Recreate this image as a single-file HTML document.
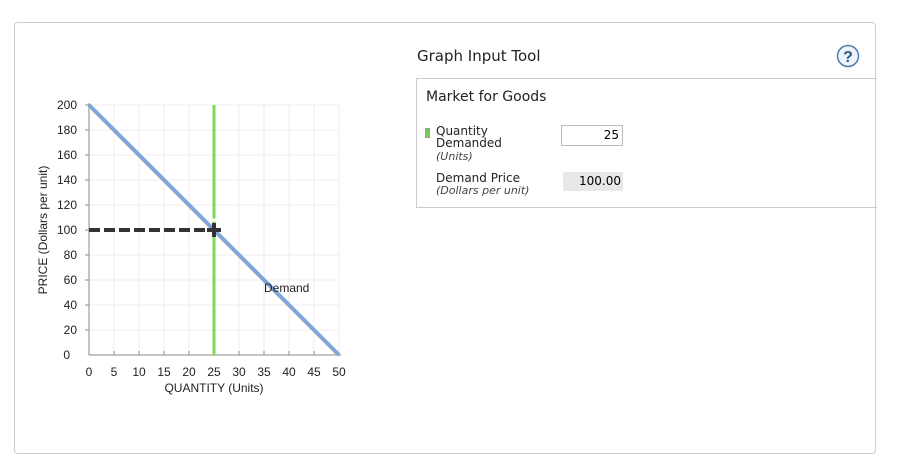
<!DOCTYPE html>
<html><head><style>
body{margin:0;width:916px;height:471px;background:#fff;position:relative;overflow:hidden;font-family:"DejaVu Sans",Verdana,sans-serif;}
.outer{position:absolute;left:14px;top:22px;width:860px;height:430px;border:1px solid #ccc;border-radius:4px;}
.t{position:absolute;color:#222;}
</style></head><body>
<div class="outer"></div>
<div class="t" style="left:417px;top:47px;font-size:15px;">Graph Input Tool</div>
<svg style="position:absolute;left:836px;top:44px" width="25" height="25"><circle cx="12" cy="12" r="10.5" fill="#eef3f8" stroke="#4a7bb0" stroke-width="1.5"/><text x="12" y="18" text-anchor="middle" font-family="Liberation Sans,sans-serif" font-size="16" font-weight="bold" fill="#2b5a8a">?</text></svg>
<div style="position:absolute;left:416px;top:78px;width:460px;height:128px;border:1px solid #ccc;border-right:none;"></div>
<div class="t" style="left:426px;top:89px;font-size:14px;">Market for Goods</div>
<div style="position:absolute;left:425px;top:128px;width:5px;height:10px;background:#7ccc5c;border:1px solid #999;box-sizing:border-box"></div>
<div class="t" style="left:436px;top:125px;font-size:12px;line-height:12px;">Quantity<br>Demanded</div>
<div class="t" style="left:436px;top:150px;font-size:11px;font-style:italic;color:#444">(Units)</div>
<div style="position:absolute;left:561px;top:125px;border:1px solid #bbb;text-align:right;font-size:12px;line-height:19px;box-sizing:border-box;padding-right:3px;width:62px;height:21px">25</div>
<div class="t" style="left:436px;top:171px;font-size:12px;">Demand Price</div>
<div class="t" style="left:436px;top:184px;font-size:11px;font-style:italic;color:#444">(Dollars per unit)</div>
<div style="position:absolute;left:563px;top:172px;width:60px;height:19px;background:#e8e8e8;text-align:right;font-size:12px;line-height:19px;box-sizing:border-box;padding-right:2px">100.00</div>
<svg style="position:absolute;left:0;top:0" width="916" height="471" font-family="Liberation Sans,Arial,sans-serif" font-size="12" fill="#222">
<g stroke="#eee" stroke-width="1">
<line x1="114" y1="105" x2="114" y2="355"/><line x1="139" y1="105" x2="139" y2="355"/><line x1="164" y1="105" x2="164" y2="355"/><line x1="189" y1="105" x2="189" y2="355"/><line x1="239" y1="105" x2="239" y2="355"/><line x1="264" y1="105" x2="264" y2="355"/><line x1="289" y1="105" x2="289" y2="355"/><line x1="314" y1="105" x2="314" y2="355"/><line x1="339" y1="105" x2="339" y2="355"/>
<line x1="89" y1="105" x2="339" y2="105"/><line x1="89" y1="130" x2="339" y2="130"/><line x1="89" y1="155" x2="339" y2="155"/><line x1="89" y1="180" x2="339" y2="180"/><line x1="89" y1="205" x2="339" y2="205"/><line x1="89" y1="255" x2="339" y2="255"/><line x1="89" y1="280" x2="339" y2="280"/><line x1="89" y1="305" x2="339" y2="305"/><line x1="89" y1="330" x2="339" y2="330"/>
</g>
<g stroke="#888" stroke-width="1">
<line x1="89" y1="103" x2="89" y2="355"/><line x1="89" y1="355" x2="341" y2="355"/>
<line x1="85" y1="105" x2="89" y2="105"/><line x1="85" y1="130" x2="89" y2="130"/><line x1="85" y1="155" x2="89" y2="155"/><line x1="85" y1="180" x2="89" y2="180"/><line x1="85" y1="205" x2="89" y2="205"/><line x1="85" y1="230" x2="89" y2="230"/><line x1="85" y1="255" x2="89" y2="255"/><line x1="85" y1="280" x2="89" y2="280"/><line x1="85" y1="305" x2="89" y2="305"/><line x1="85" y1="330" x2="89" y2="330"/>
<line x1="114" y1="351" x2="114" y2="355"/><line x1="139" y1="351" x2="139" y2="355"/><line x1="164" y1="351" x2="164" y2="355"/><line x1="189" y1="351" x2="189" y2="355"/><line x1="239" y1="351" x2="239" y2="355"/><line x1="264" y1="351" x2="264" y2="355"/><line x1="289" y1="351" x2="289" y2="355"/><line x1="314" y1="351" x2="314" y2="355"/>
</g>
<line x1="214" y1="105" x2="214" y2="355" stroke="#7ed957" stroke-width="3"/>
<line x1="89" y1="105" x2="339" y2="355" stroke="#7fa6d6" stroke-width="4"/>
<line x1="211" y1="220" x2="217" y2="220" stroke="#fff" stroke-width="3"/>
<line x1="89" y1="230" x2="206" y2="230" stroke="#333" stroke-width="4" stroke-dasharray="11,4"/>
<path d="M207 230H221M214 223V237" stroke="#333" stroke-width="4"/>
<text x="264" y="292">Demand</text>
<g text-anchor="end">
<text x="77" y="109">200</text><text x="77" y="134">180</text><text x="77" y="159">160</text><text x="77" y="184">140</text><text x="77" y="209">120</text><text x="77" y="234">100</text><text x="77" y="259">80</text><text x="77" y="284">60</text><text x="77" y="309">40</text><text x="77" y="334">20</text><text x="70" y="359">0</text>
</g>
<g text-anchor="middle">
<text x="89" y="376">0</text><text x="114" y="376">5</text><text x="139" y="376">10</text><text x="164" y="376">15</text><text x="189" y="376">20</text><text x="214" y="376">25</text><text x="239" y="376">30</text><text x="264" y="376">35</text><text x="289" y="376">40</text><text x="314" y="376">45</text><text x="339" y="376">50</text>
<text x="214" y="392">QUANTITY (Units)</text>
<text transform="translate(47,230) rotate(-90)">PRICE (Dollars per unit)</text>
</g>
</svg>
</body></html>
